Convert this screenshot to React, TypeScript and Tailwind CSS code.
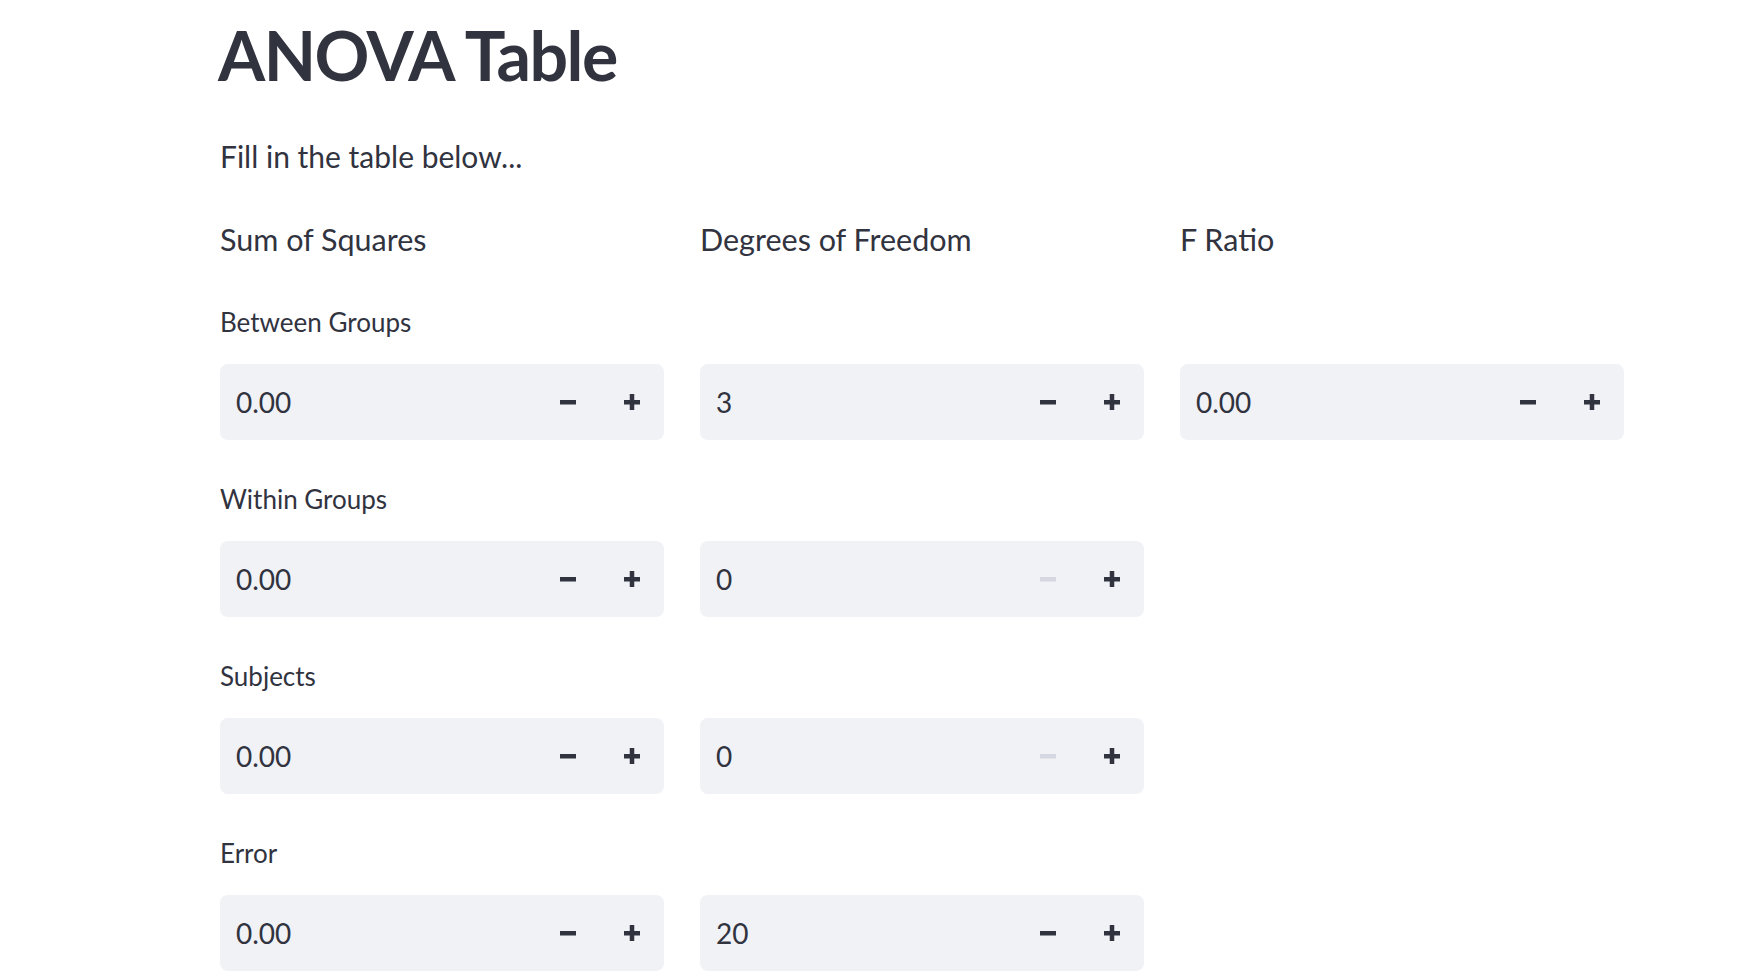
import React from "react";

type Field = { label: string; value: string; minDisabled?: boolean };

const columns: { title: string; fields: Field[] }[] = [
  {
    title: "Sum of Squares",
    fields: [
      { label: "Between Groups", value: "0.00" },
      { label: "Within Groups", value: "0.00" },
      { label: "Subjects", value: "0.00" },
      { label: "Error", value: "0.00" },
    ],
  },
  {
    title: "Degrees of Freedom",
    fields: [
      { label: "", value: "3" },
      { label: "", value: "0", minDisabled: true },
      { label: "", value: "0", minDisabled: true },
      { label: "", value: "20" },
    ],
  },
  {
    title: "F Ratio",
    fields: [{ label: "", value: "0.00" }],
  },
];

function MinusIcon({ disabled }: { disabled?: boolean }) {
  return (
    <svg width="16" height="16" viewBox="0 0 16 16" aria-hidden>
      <rect x="0" y="6" width="16" height="4.5" fill={disabled ? "#D5D8E0" : "#31333F"} />
    </svg>
  );
}

function PlusIcon() {
  return (
    <svg width="16" height="16" viewBox="0 0 16 16" aria-hidden>
      <rect x="0" y="6" width="16" height="4.5" fill="#31333F" />
      <rect x="5.75" y="0" width="4.5" height="16" fill="#31333F" />
    </svg>
  );
}

function NumberInput({ field }: { field: Field }) {
  return (
    <div className="flex flex-col">
      <div className="h-[29px] text-[26px] leading-[29px] whitespace-nowrap">{field.label}</div>
      <div className="mt-[27px] flex h-[76px] items-center rounded-lg bg-[#F0F2F6]">
        <div className="flex-1 pl-[16px] text-[28px]">{field.value}</div>
        <button className="flex h-full w-[64px] items-center justify-center">
          <MinusIcon disabled={field.minDisabled} />
        </button>
        <button className="flex h-full w-[64px] items-center justify-center">
          <PlusIcon />
        </button>
      </div>
    </div>
  );
}

export default function App() {
  return (
    <div
      className="min-h-screen bg-white pt-[10px] pl-[220px] text-[#31333F]"
      style={{ fontFamily: "Lato, 'Noto Sans', sans-serif" }}
    >
      <h1 className="mt-[2px] -ml-[2px] text-[68px] font-bold leading-[86px] tracking-[-1.5px]">ANOVA Table</h1>
      <p className="mt-[41px] text-[30px] leading-[34px]">Fill in the table below...</p>

      <div className="mt-[47px] grid w-[1404px] grid-cols-3 gap-[36px]">
        {columns.map((col) => (
          <div key={col.title} className="flex flex-col">
            <div className="mb-[50px] text-[30.5px] leading-[38px]">{col.title}</div>
            <div className="flex flex-col gap-[45px]">
              {col.fields.map((f, i) => (
                <NumberInput key={i} field={f} />
              ))}
            </div>
          </div>
        ))}
      </div>
    </div>
  );
}
